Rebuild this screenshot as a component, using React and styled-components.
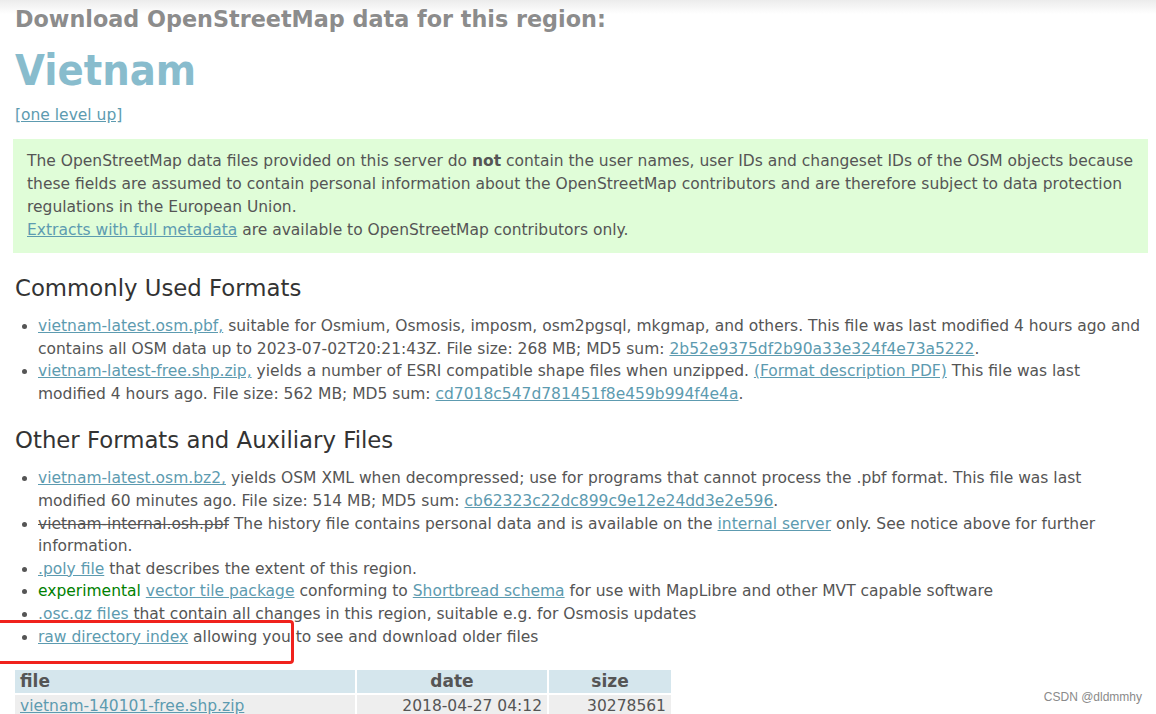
import React from 'react';
import styled, { createGlobalStyle } from 'styled-components';

const GlobalStyle = createGlobalStyle`
  html, body {
    margin: 0;
    padding: 0;
  }
  body {
    background: linear-gradient(#ececec 0px, #ffffff 14px) no-repeat, #fff;
    font-family: "DejaVu Sans", Verdana, sans-serif;
    font-size: 15.5px;
    color: #555;
  }
`;

const Page = styled.div`
  position: relative;
  padding: 0 9px 0 15px;
  overflow: hidden;
  min-height: 714px;
`;

const RegionLabel = styled.h2`
  margin: 0;
  padding-top: 4px;
  font-size: 22.3px;
  line-height: 30px;
  font-weight: bold;
  color: #8c8c8c;
`;

const RegionName = styled.h1`
  margin: 10px 0 0;
  font-family: "DejaVu Sans Condensed", "DejaVu Sans", sans-serif;
  font-size: 43px;
  line-height: 52px;
  font-weight: bold;
  color: #88bccd;
`;

const UpLine = styled.p`
  margin: 8px 0 0;
  line-height: 23px;
`;

const Link = styled.a`
  color: #5d9bb0;
  text-decoration: underline;
`;

const Notice = styled.div`
  margin: 12px -1px 0 -2px;
  padding: 11px 6px 11px 14px;
  background: #e0fdd8;
  line-height: 23px;
`;

const SectionTitle = styled.h2`
  margin: 19px 0 0;
  font-size: 22.8px;
  line-height: 32px;
  font-weight: normal;
  color: #333;
`;

const List = styled.ul`
  margin: 11px 0 0;
  padding-left: 23px;
  line-height: 22.6px;
`;

const Item = styled.li``;

const Experimental = styled.span`
  color: #008000;
`;

const Struck = styled.span`
  text-decoration: line-through;
`;

const FileTable = styled.table`
  margin-top: 20px;
  margin-left: -2px;
  border-collapse: separate;
  border-spacing: 2px;
  line-height: 22px;
`;

const Head = styled.th`
  background: #d5e6ed;
  color: #555;
  font-size: 17px;
  line-height: 23px;
  font-weight: bold;
  padding: 0 5px;
  text-align: ${p => p.$align || 'center'};
  width: ${p => p.$width}px;
`;

const Cell = styled.td`
  background: #eeeeee;
  padding: 0 5px;
  text-align: ${p => p.$align || 'left'};
`;

const Highlight = styled.div`
  position: absolute;
  left: -20px;
  top: 620px;
  width: 308px;
  height: 38px;
  border: 3px solid #f0221d;
  border-radius: 4px;
  pointer-events: none;
`;

const Watermark = styled.div`
  position: absolute;
  right: 14px;
  top: 690px;
  font-family: "Liberation Sans", Arial, sans-serif;
  font-size: 12px;
  color: #8a8a8a;
`;

const App = () => {
  return (
    <>
      <GlobalStyle />
      <Page>
        <RegionLabel>Download OpenStreetMap data for this region:</RegionLabel>
        <RegionName>Vietnam</RegionName>
        <UpLine>
          <Link href="#">[one level up]</Link>
        </UpLine>

        <Notice>
          The OpenStreetMap data files provided on this server do <b>not</b> contain the user names, user IDs and
          changeset IDs of the OSM objects because these fields are assumed to contain personal information about the
          OpenStreetMap contributors and are therefore subject to data protection regulations in the European Union.
          <br />
          <Link href="#">Extracts with full metadata</Link> are available to OpenStreetMap contributors only.
        </Notice>

        <SectionTitle>Commonly Used Formats</SectionTitle>
        <List>
          <Item>
            <Link href="#">vietnam-latest.osm.pbf,</Link> suitable for Osmium, Osmosis, imposm, osm2pgsql, mkgmap, and
            others. This file was last modified 4 hours ago and contains all OSM data up to 2023-07-02T20:21:43Z. File
            size: 268 MB; MD5 sum: <Link href="#">2b52e9375df2b90a33e324f4e73a5222</Link>.
          </Item>
          <Item>
            <Link href="#">vietnam-latest-free.shp.zip,</Link> yields a number of ESRI compatible shape files when
            unzipped. <Link href="#">(Format description PDF)</Link> This file was last modified 4 hours ago. File
            size: 562 MB; MD5 sum: <Link href="#">cd7018c547d781451f8e459b994f4e4a</Link>.
          </Item>
        </List>

        <SectionTitle>Other Formats and Auxiliary Files</SectionTitle>
        <List>
          <Item>
            <Link href="#">vietnam-latest.osm.bz2,</Link> yields OSM XML when decompressed; use for programs that
            cannot process the .pbf format. This file was last modified 60 minutes ago. File size: 514 MB; MD5 sum:{' '}
            <Link href="#">cb62323c22dc899c9e12e24dd3e2e596</Link>.
          </Item>
          <Item>
            <Struck>vietnam-internal.osh.pbf</Struck> The history file contains personal data and is available on the{' '}
            <Link href="#">internal server</Link> only. See notice above for further information.
          </Item>
          <Item>
            <Link href="#">.poly file</Link> that describes the extent of this region.
          </Item>
          <Item>
            <Experimental>experimental</Experimental> <Link href="#">vector tile package</Link> conforming to{' '}
            <Link href="#">Shortbread schema</Link> for use with MapLibre and other MVT capable software
          </Item>
          <Item>
            <Link href="#">.osc.gz files</Link> that contain all changes in this region, suitable e.g. for Osmosis
            updates
          </Item>
          <Item>
            <Link href="#">raw directory index</Link> allowing you to see and download older files
          </Item>
        </List>

        <FileTable>
          <thead>
            <tr>
              <Head $align="left" $width={330}>file</Head>
              <Head $width={180}>date</Head>
              <Head $width={112}>size</Head>
            </tr>
          </thead>
          <tbody>
            <tr>
              <Cell>
                <Link href="#">vietnam-140101-free.shp.zip</Link>
              </Cell>
              <Cell $align="right">2018-04-27 04:12</Cell>
              <Cell $align="right">30278561</Cell>
            </tr>
          </tbody>
        </FileTable>

        <Highlight />
        <Watermark>CSDN @dldmmhy</Watermark>
      </Page>
    </>
  );
};

export default App;
